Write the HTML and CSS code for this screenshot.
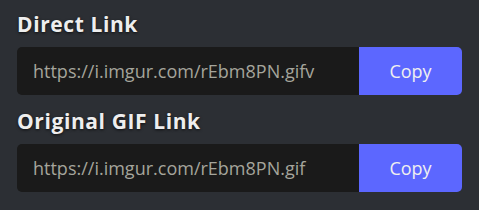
FILE: index.html
```html
<!DOCTYPE html>
<html lang="en">
<head>
  <meta charset="UTF-8" />
  <title>Share Links</title>
  <link rel="stylesheet" href="styles.css">
</head>
<body>
  <div class="link-group">
    <h2>Direct Link</h2>
    <div class="link-row">
      <input type="text" value="https://i.imgur.com/rEbm8PN.gifv" readonly />
      <button>Copy</button>
    </div>
  </div>

  <div class="link-group">
    <h2>Original GIF Link</h2>
    <div class="link-row">
      <input type="text" value="https://i.imgur.com/rEbm8PN.gif" readonly />
      <button>Copy</button>
    </div>
  </div>
</body>
</html>
```

FILE: styles.css
```css
body {
  font-family: 'Open Sans', sans-serif;
  background: #2c2f34;
  color: #eee;
  margin: 0;
  padding: 11px 17px 0 17px;
  width: 445px;
}
h2 {
  font-size: 21px;
  font-weight: 700;
  letter-spacing: 0.6px;
  margin: 0 0 10px 0;
  line-height: 26px;
  text-shadow: 0 1px 3px rgba(0, 0, 0, 0.7);
}
.link-group {
  margin-bottom: 13px;
}
.link-row {
  display: flex;
  height: 48px;
}
input[type="text"] {
  flex: 1;
  min-width: 0;
  background: #1a1a1a;
  color: #a5a59c;
  border: none;
  border-radius: 5px 0 0 5px;
  padding: 0 16px;
  font-family: 'Open Sans', sans-serif;
  font-size: 18px;
  outline: none;
}
button {
  width: 103px;
  background: #5c67ff;
  color: #f0f0f0;
  border: none;
  border-radius: 0 5px 5px 0;
  font-family: 'Open Sans', sans-serif;
  font-size: 18px;
  cursor: pointer;
}
```
